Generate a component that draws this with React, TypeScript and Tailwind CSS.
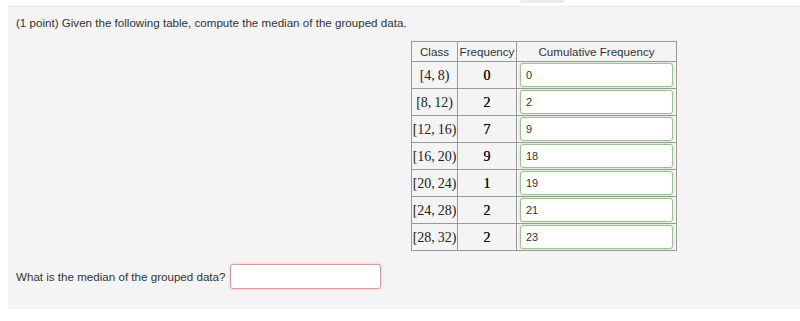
import React from "react";

const rows: { cls: [number, number]; freq: number; cum: string }[] = [
  { cls: [4, 8], freq: 0, cum: "0" },
  { cls: [8, 12], freq: 2, cum: "2" },
  { cls: [12, 16], freq: 7, cum: "9" },
  { cls: [16, 20], freq: 9, cum: "18" },
  { cls: [20, 24], freq: 1, cum: "19" },
  { cls: [24, 28], freq: 2, cum: "21" },
  { cls: [28, 32], freq: 2, cum: "23" },
];

const math = { fontFamily: '"Liberation Serif", "DejaVu Serif", serif' };

export default function App() {
  return (
    <div className="relative h-[321px] w-[800px] overflow-hidden bg-white" style={{ fontFamily: '"Liberation Sans", Arial, sans-serif' }}>
      <div className="absolute left-[520px] top-0 h-[3px] w-[45px] rounded-b bg-[#ececec]" />
      <div className="pl-2 pt-[6px]">
        <div className="h-[303px] border-t border-[#ececec] bg-[#f4f4f4] pl-2 pt-[9px] text-[11.6px] text-[#333]">
          <p className="leading-[14px]">(1 point) Given the following table, compute the median of the grouped data.</p>
          <div className="ml-[395px] mt-[11px]">
            <table className="table-fixed border-collapse border border-[#555] bg-[#f4f4f4]">
              <colgroup>
                <col className="w-[46px]" />
                <col className="w-[59px]" />
                <col className="w-[160px]" />
              </colgroup>
              <thead>
                <tr className="h-[20px]">
                  <th className="whitespace-nowrap border border-[#999] p-0 text-center font-normal">Class</th>
                  <th className="whitespace-nowrap border border-[#999] p-0 text-center font-normal">Frequency</th>
                  <th className="whitespace-nowrap border border-[#999] p-0 text-center font-normal">Cumulative Frequency</th>
                </tr>
              </thead>
              <tbody>
                {rows.map((r) => (
                  <tr key={r.cls[0]} className="h-[27px]">
                    <td className="whitespace-nowrap border border-[#999] p-0 text-center text-[14px] text-[#222]" style={math}>
                      [{r.cls[0]},{"\u2009"}{r.cls[1]})
                    </td>
                    <td className="border border-[#999] p-0 text-center text-[14px] text-[#111] [text-shadow:0_0_0.4px_#111]" style={math}>
                      {r.freq}
                    </td>
                    <td className="border border-[#999] px-[3px] py-0">
                      <div className="flex h-[24px] items-center rounded-[3px] border border-[#9cc293] bg-white pl-[5px] text-[11px] text-[#333] shadow-[0_0_2px_#b7d6b0]">
                        {r.cum}
                      </div>
                    </td>
                  </tr>
                ))}
              </tbody>
            </table>
          </div>
          <div className="mt-[13px] flex items-center gap-[5px]">
            <span>What is the median of the grouped data?</span>
            <div className="h-[25px] w-[151px] rounded-[3px] border border-[#d99a9a] bg-white shadow-[0_0_3px_#f0c4c4]" />
          </div>
        </div>
      </div>
    </div>
  );
}
